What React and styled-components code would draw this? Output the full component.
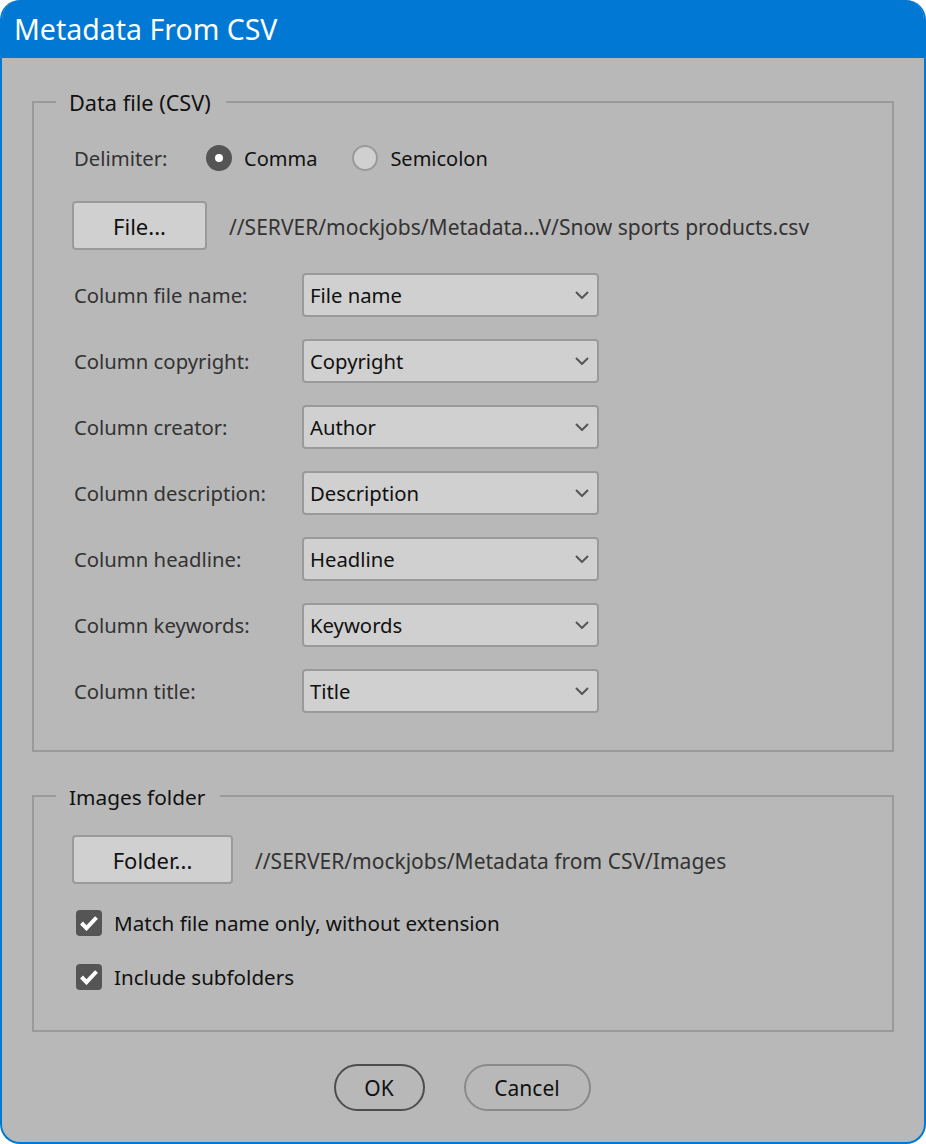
import React from "react";
import styled, { createGlobalStyle } from "styled-components";

const GlobalStyle = createGlobalStyle`
    html, body {
        margin: 0;
        padding: 0;
        background: #ffffff;
    }
    * {
        box-sizing: border-box;
    }
`;

const Dialog = styled.div`
    width: 926px;
    height: 1144px;
    display: flex;
    flex-direction: column;
    background-color: #b8b8b8;
    border: 2px solid #0078d4;
    border-top: none;
    border-radius: 20px;
    overflow: hidden;
    font-family: "Noto Sans", "Open Sans", sans-serif;
    font-size: 20.3px;
    color: #111111;
`;

const TitleBar = styled.div`
    height: 58px;
    flex-shrink: 0;
    margin: 0 -2px;
    padding: 0 15px 0 14px;
    display: flex;
    align-items: center;
    background-color: #0078d4;
    color: #ffffff;
    font-size: 28.5px;
`;

const Body = styled.div`
    flex: 1;
    display: flex;
    flex-direction: column;
    padding: 30px 30px 0;
`;

const Group = styled.fieldset`
    margin: 0;
    padding: 0 0 0 38px;
    height: ${(p) => p.$height}px;
    margin-bottom: ${(p) => p.$gap}px;
    border: 2px solid #9a9a9a;
    display: flex;
    flex-direction: column;
    align-items: flex-start;
`;

const Legend = styled.legend`
    margin-left: -16px;
    padding: 2px 15px 0 13px;
    line-height: 26px;
    font-size: ${(p) => p.$size}px;
`;

const Row = styled.div`
    display: flex;
    align-items: center;
    height: ${(p) => p.$height}px;
    margin-top: ${(p) => p.$top || 0}px;
`;

const Label = styled.span`
    width: 228px;
    margin-left: 2px;
    color: #333333;
`;

const DelimiterLabel = styled.span`
    width: 132px;
    margin-left: 2px;
    color: #333333;
`;

const Radio = styled.span`
    width: 26px;
    height: 26px;
    border-radius: 50%;
    display: flex;
    align-items: center;
    justify-content: center;
    background-color: ${(p) => (p.$checked ? "#555555" : "#d0d0d0")};
    border: 2px solid ${(p) => (p.$checked ? "#555555" : "#9a9a9a")};
    &::after {
        content: "";
        display: ${(p) => (p.$checked ? "block" : "none")};
        width: 8px;
        height: 8px;
        border-radius: 50%;
        background-color: #ffffff;
    }
`;

const RadioText = styled.span`
    margin: 0 35px 0 12px;
    font-size: 20px;
`;

const FileButton = styled.button`
    width: ${(p) => p.$width}px;
    height: 49px;
    padding: 0;
    background-color: #d0d0d0;
    border: 2px solid #9a9a9a;
    border-radius: 4px;
    font: inherit;
    font-size: 22px;
    color: inherit;
`;

const PathText = styled.span`
    margin-left: 22px;
    padding-top: 2px;
    color: #333333;
    font-size: 21px;
`;

const Select = styled.div`
    width: 297px;
    height: 44px;
    padding: 0 8px 0 6px;
    display: flex;
    align-items: center;
    justify-content: space-between;
    background-color: #d0d0d0;
    border: 2px solid #9a9a9a;
    border-radius: 4px;
`;

const CheckRow = styled(Row)`
    font-size: 20.6px;
`;

const CheckBox = styled.span`
    width: 26px;
    height: 26px;
    margin: 0 12px 0 4px;
    display: flex;
    align-items: center;
    justify-content: center;
    background-color: #555555;
    border-radius: 4px;
`;

const Footer = styled.div`
    display: flex;
    justify-content: center;
    gap: 39px;
    padding-right: 2px;
    font-size: 21px;
`;

const PillButton = styled.button`
    width: ${(p) => p.$width}px;
    height: 47px;
    padding: 0;
    background: transparent;
    border: 2px solid ${(p) => (p.$primary ? "#4d4d4d" : "#8a8a8a")};
    border-radius: 24px;
    font: inherit;
    color: inherit;
`;

const Chevron = () => (
    <svg width="14" height="8" viewBox="0 0 14 8" fill="none">
        <path d="M1 1l6 6 6-6" stroke="#555555" strokeWidth="2" />
    </svg>
);

const Check = () => (
    <svg width="20" height="16" viewBox="0 0 20 16" fill="none">
        <path d="M2.5 8l5 5.2L17.5 2.5" stroke="#ffffff" strokeWidth="4" />
    </svg>
);

const columns = [
    ["Column file name:", "File name"],
    ["Column copyright:", "Copyright"],
    ["Column creator:", "Author"],
    ["Column description:", "Description"],
    ["Column headline:", "Headline"],
    ["Column keywords:", "Keywords"],
    ["Column title:", "Title"],
];

const App = () => {
    return (
        <Dialog>
            <GlobalStyle />
            <TitleBar>Metadata From CSV</TitleBar>
            <Body>
                <Group $height={664} $gap={30}>
                    <Legend $size={21.7}>Data file (CSV)</Legend>
                    <Row $height={44} $top={20}>
                        <DelimiterLabel>Delimiter:</DelimiterLabel>
                        <Radio $checked />
                        <RadioText>Comma</RadioText>
                        <Radio />
                        <RadioText>Semicolon</RadioText>
                    </Row>
                    <Row $height={49} $top={21}>
                        <FileButton $width={135}>File...</FileButton>
                        <PathText>//SERVER/mockjobs/Metadata...V/Snow sports products.csv</PathText>
                    </Row>
                    {columns.map(([label, value], i) => (
                        <Row key={label} $height={44} $top={i === 0 ? 23 : 22}>
                            <Label>{label}</Label>
                            <Select>
                                {value}
                                <Chevron />
                            </Select>
                        </Row>
                    ))}
                </Group>
                <Group $height={250} $gap={32}>
                    <Legend $size={20.8}>Images folder</Legend>
                    <Row $height={49} $top={25}>
                        <FileButton $width={161}>Folder...</FileButton>
                        <PathText>//SERVER/mockjobs/Metadata from CSV/Images</PathText>
                    </Row>
                    <CheckRow $height={26} $top={26}>
                        <CheckBox>
                            <Check />
                        </CheckBox>
                        Match file name only, without extension
                    </CheckRow>
                    <CheckRow $height={26} $top={28}>
                        <CheckBox>
                            <Check />
                        </CheckBox>
                        Include subfolders
                    </CheckRow>
                </Group>
                <Footer>
                    <PillButton $width={91} $primary>OK</PillButton>
                    <PillButton $width={127}>Cancel</PillButton>
                </Footer>
            </Body>
        </Dialog>
    );
};

export default App;
